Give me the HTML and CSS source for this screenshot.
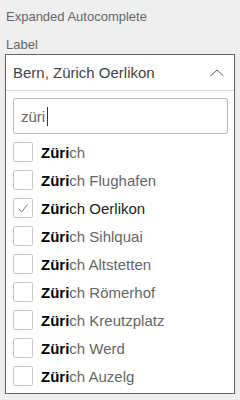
FILE: index.html
```html
<!DOCTYPE html>
<html lang="en">
<head>
  <meta charset="UTF-8">
  <meta name="viewport" content="width=device-width, initial-scale=1.0">
  <title>Expanded Autocomplete</title>
  <link rel="stylesheet" href="styles.css">
</head>
<body>
  <div class="title">Expanded Autocomplete</div>
  <div class="label">Label</div>
  <div class="autocomplete">
    <div class="selected">
      <span>Bern, Zürich Oerlikon</span>
      <svg class="chevron" width="14" height="8" viewBox="0 0 14 8">
        <polyline points="0.5,7 7,1 13.5,7" fill="none" stroke="#555" stroke-width="1"/>
      </svg>
    </div>
    <div class="panel">
      <div class="search">züri<span class="caret"></span></div>
      <ul class="options">
        <li><span class="box"></span><span><b>Züri</b>ch</span></li>
        <li><span class="box"></span><span><b>Züri</b>ch Flughafen</span></li>
        <li class="checked">
          <span class="box">
            <svg width="10" height="9" viewBox="0 0 10 9">
              <polyline points="0.5,4.5 3.5,8 9.5,0.5" fill="none" stroke="#777" stroke-width="1"/>
            </svg>
          </span>
          <span><b>Züri</b>ch Oerlikon</span>
        </li>
        <li><span class="box"></span><span><b>Züri</b>ch Sihlquai</span></li>
        <li><span class="box"></span><span><b>Züri</b>ch Altstetten</span></li>
        <li><span class="box"></span><span><b>Züri</b>ch Römerhof</span></li>
        <li><span class="box"></span><span><b>Züri</b>ch Kreutzplatz</span></li>
        <li><span class="box"></span><span><b>Züri</b>ch Werd</span></li>
        <li><span class="box"></span><span><b>Züri</b>ch Auzelg</span></li>
      </ul>
    </div>
  </div>
</body>
</html>
```

FILE: styles.css
```css
body {
  font-family: "Liberation Sans", Arial, sans-serif;
  background-color: #efefef;
  margin: 0;
  padding: 9px 5px 0 5px;
}
.title {
  font-size: 13px;
  line-height: 16px;
  color: #666;
  padding-left: 1px;
  margin-bottom: 12px;
}
.label {
  font-size: 13px;
  line-height: 16px;
  color: #666;
  padding-left: 1px;
  margin-bottom: 1px;
}
.autocomplete {
  width: 228px;
  background: #fff;
  border: 1px solid #666;
  box-shadow: 0 2px 2px rgba(0, 0, 0, 0.15);
}
.selected {
  display: flex;
  align-items: center;
  justify-content: space-between;
  height: 35px;
  padding: 0 10px 0 7px;
  font-size: 15px;
  color: #444;
  border-bottom: 1px solid #ddd;
}
.chevron {
  margin-top: 1px;
}
.panel {
  padding: 7px 6px 3px 7px;
}
.search {
  height: 34px;
  border: 1px solid #bbb;
  border-radius: 2px;
  padding: 0 7px;
  display: flex;
  align-items: center;
  font-size: 15px;
  color: #666;
}
.caret {
  display: inline-block;
  width: 1px;
  height: 19px;
  background: #333;
  margin-left: 2px;
}
.options {
  list-style: none;
  margin: 4px 0 0 0;
  padding: 0;
}
.options li {
  display: flex;
  align-items: center;
  height: 28px;
  font-size: 15px;
  color: #666;
}
.options li.checked {
  color: #222;
}
.options b {
  color: #000;
}
.box {
  box-sizing: border-box;
  width: 20px;
  height: 20px;
  border: 1px solid #c8c8c8;
  border-radius: 2px;
  margin-right: 8px;
  display: flex;
  align-items: center;
  justify-content: center;
}
```
